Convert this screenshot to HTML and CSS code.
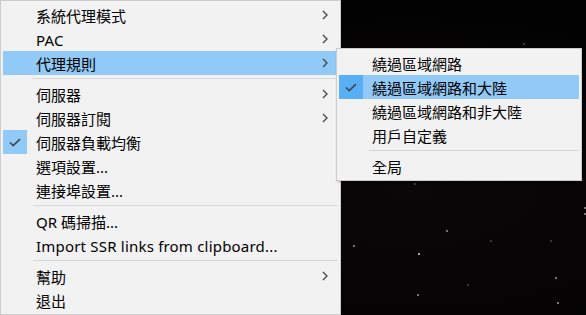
FILE: index.html
```html
<!DOCTYPE html>
<html>
<head>
<meta charset="utf-8">
<link rel="stylesheet" href="styles.css">
</head>
<body>
<div class="sky">
  <span class="star" style="left:353px;top:245px"></span>
  <span class="star bright" style="left:418px;top:253px"></span>
  <span class="star" style="left:446px;top:230px"></span>
  <span class="star" style="left:417px;top:294px"></span>
  <span class="star dim" style="left:467px;top:284px"></span>
  <span class="star" style="left:555px;top:277px"></span>
  <span class="star" style="left:557px;top:302px"></span>
  <span class="star" style="left:584px;top:207px"></span>
  <span class="star" style="left:584px;top:213px"></span>
  <span class="star dim" style="left:550px;top:240px"></span>
  <span class="star dim" style="left:490px;top:240px"></span>
  <span class="star dim" style="left:523px;top:43px"></span>
  <span class="star dim" style="left:414px;top:183px"></span>
</div>

<div class="menu main">
  <div class="item"><span class="gutter"></span><span class="label">系統代理模式</span><svg class="arrow" viewBox="0 0 6 10"><polyline points="1,1 5,5 1,9"/></svg></div>
  <div class="item"><span class="gutter"></span><span class="label latin">PAC</span><svg class="arrow" viewBox="0 0 6 10"><polyline points="1,1 5,5 1,9"/></svg></div>
  <div class="item hot"><span class="gutter"></span><span class="label">代理規則</span><svg class="arrow" viewBox="0 0 6 10"><polyline points="1,1 5,5 1,9"/></svg></div>
  <div class="sep"></div>
  <div class="item"><span class="gutter"></span><span class="label">伺服器</span><svg class="arrow" viewBox="0 0 6 10"><polyline points="1,1 5,5 1,9"/></svg></div>
  <div class="item"><span class="gutter"></span><span class="label">伺服器訂閱</span><svg class="arrow" viewBox="0 0 6 10"><polyline points="1,1 5,5 1,9"/></svg></div>
  <div class="item"><span class="gutter checked"><svg class="check" viewBox="0 0 12 9"><polyline points="1,4.5 4.2,7.6 11,1.2"/></svg></span><span class="label">伺服器負載均衡</span></div>
  <div class="item"><span class="gutter"></span><span class="label">選項設置...</span></div>
  <div class="item"><span class="gutter"></span><span class="label">連接埠設置...</span></div>
  <div class="sep"></div>
  <div class="item"><span class="gutter"></span><span class="label">QR 碼掃描...</span></div>
  <div class="item"><span class="gutter"></span><span class="label latin">Import SSR links from clipboard...</span></div>
  <div class="sep"></div>
  <div class="item"><span class="gutter"></span><span class="label">幫助</span><svg class="arrow" viewBox="0 0 6 10"><polyline points="1,1 5,5 1,9"/></svg></div>
  <div class="item"><span class="gutter"></span><span class="label">退出</span></div>
</div>

<div class="menu sub">
  <div class="item"><span class="gutter"></span><span class="label">繞過區域網路</span></div>
  <div class="item hot"><span class="gutter checked strong"><svg class="check" viewBox="0 0 12 9"><polyline points="1,4.5 4.2,7.6 11,1.2"/></svg></span><span class="label">繞過區域網路和大陸</span></div>
  <div class="item"><span class="gutter"></span><span class="label">繞過區域網路和非大陸</span></div>
  <div class="item"><span class="gutter"></span><span class="label">用戶自定義</span></div>
  <div class="sep"></div>
  <div class="item"><span class="gutter"></span><span class="label">全局</span></div>
</div>
</body>
</html>
```

FILE: styles.css
```css
html, body {
  margin: 0;
  padding: 0;
  width: 586px;
  height: 315px;
  overflow: hidden;
  background: #020101;
  font-family: "Noto Sans", "Noto Sans CJK TC", sans-serif;
  font-size: 15px;
  color: #000;
}

body {
  position: relative;
}

.sky {
  position: absolute;
  inset: 0;
  background: radial-gradient(ellipse at 70% 60%, #0a0708 0%, #030202 70%);
}

.star {
  position: absolute;
  width: 2px;
  height: 2px;
  background: #9a9a9a;
  border-radius: 1px;
}

.star.bright {
  background: #d8d8d8;
}

.star.dim {
  background: #4a4a4a;
}

.menu {
  position: relative;
  box-sizing: border-box;
  background: #f2f2f2;
  border: 1px solid #cccccc;
  padding: 2px;
  display: flex;
  flex-direction: column;
}

.main {
  width: 341px;
  height: 315px;
}

.sub {
  position: absolute;
  left: 336px;
  top: 48px;
  width: 246px;
  height: 133px;
  box-shadow: 1px 1px 2px rgba(0, 0, 0, 0.25);
}

.item {
  height: 24px;
  display: flex;
  align-items: center;
  white-space: nowrap;
}

.item.hot {
  background: #91c9f7;
}

.gutter {
  width: 24px;
  height: 24px;
  flex: none;
  display: flex;
  align-items: center;
  justify-content: center;
}

.gutter.checked {
  background: #91c9f7;
}

.gutter.checked.strong {
  background: #56b0f3;
}

.check {
  width: 12px;
  height: 9px;
  fill: none;
  stroke: #3d4652;
  stroke-width: 1.6;
}

.label {
  margin-left: 9px;
  flex: 1;
  line-height: 24px;
  padding-top: 1px;
}

.label.latin {
  letter-spacing: 0.2px;
}

.arrow {
  width: 6px;
  height: 10px;
  margin-right: 10px;
  flex: none;
  fill: none;
  stroke: #444;
  stroke-width: 1.3;
}

.sep {
  height: 7px;
  display: flex;
  align-items: center;
  padding-left: 30px;
}

.sep::before {
  content: "";
  flex: 1;
  height: 1px;
  background: #d7d7d7;
}
```
